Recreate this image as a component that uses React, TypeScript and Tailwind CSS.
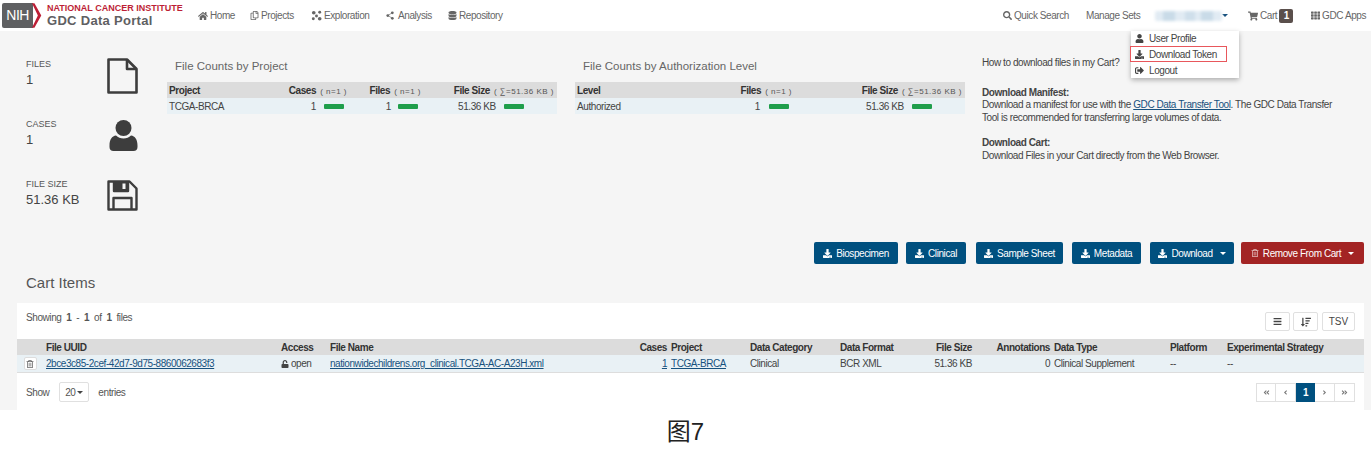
import { FaAngleLeft, FaAngleRight, FaAngleDoubleLeft, FaAngleDoubleRight, FaBars, FaRegCopy, FaDatabase, FaDownload, FaHome, FaSearch, FaShoppingCart, FaSignOutAlt, FaSortAmountDown, FaTh, FaUnlock, FaUser, FaRegTrashAlt } from "react-icons/fa"

const Caret = ({ color = "border-t-white" }: { color?: string }) => (
  <span className={`inline-block h-0 w-0 border-x-[3px] border-t-[3px] border-x-transparent ${color}`} />
)

const Bar = () => <span className="inline-block h-[5px] w-5 shrink-0 rounded-[1px] bg-[#1f9e4b]" />

// little molecule-ish icon used for Exploration / Analysis
const DotsIcon = ({ small }: { small?: boolean }) => (
  <svg width="11" height="11" viewBox="0 0 12 12" fill="currentColor">
    {small ? (
      <>
        <circle cx="3" cy="6" r="1.5" />
        <circle cx="8" cy="3" r="1.5" />
        <circle cx="8" cy="9" r="1.5" />
        <path d="M3 6 8 3M3 6l5 3" stroke="currentColor" strokeWidth="0.7" />
      </>
    ) : (
      <>
        <circle cx="3" cy="3" r="2" />
        <circle cx="9.5" cy="2.5" r="1.6" />
        <circle cx="6" cy="6.5" r="1.6" />
        <circle cx="2.5" cy="9.5" r="1.6" />
        <circle cx="9.5" cy="9.5" r="2" />
      </>
    )}
  </svg>
)

const FileIcon = () => (
  <svg width="31" height="36" viewBox="0 0 31 36" fill="none" stroke="#3d3d3d" strokeWidth="2.6" strokeLinejoin="round">
    <path d="M1.5 1.5h18.5l9.5 9.5v23.5h-28z" />
    <path d="M20 1.5v9.5h9.5" />
  </svg>
)

const UserIcon = () => (
  <svg width="29" height="31" viewBox="0 0 29 31" fill="#3d3d3d" className="ml-[2px]">
    <circle cx="14.5" cy="8" r="8" />
    <path d="M7 15.5c2 2 4.500 3 7.500 3s5.500-1 7.500-3c4 .5 6.500 4 6.500 10v1.500c0 2.500-1.500 4-4 4h-20c-2.500 0-4-1.500-4-4v-1.500c0-6 2.500-9.500 6.500-10z" />
  </svg>
)

const SaveIcon = () => (
  <svg width="31" height="31" viewBox="0 0 31 31" fill="none" stroke="#3d3d3d" strokeWidth="2.4" strokeLinejoin="round">
    <path d="M1.500 1.500h21l7 7v21h-28z" />
    <path d="M7 2v9h14v-9" fill="#3d3d3d" />
    <rect x="15.500" y="3.500" width="3" height="5.500" fill="#f5f5f5" stroke="none" />
    <path d="M6.500 29v-11h18v11" />
  </svg>
)

function NavBar() {
  const items = [
    { label: "Home", icon: <FaHome size={10} />, w: "w-[52px]" },
    { label: "Projects", icon: <FaRegCopy size={9} />, w: "w-[61px]" },
    { label: "Exploration", icon: <DotsIcon />, w: "w-[74px]" },
    { label: "Analysis", icon: <DotsIcon small />, w: "w-[63px]" },
    { label: "Repository", icon: <FaDatabase size={9} />, w: "w-[60px]" },
  ]
  return (
    <nav className="relative flex h-[31px] items-center bg-white text-[10px] tracking-[-0.42px] text-[#666]">
      <div className="ml-[2px] flex h-[25px] w-[40px] items-center">
        <div className="flex h-[25px] w-[32px] items-center justify-center rounded-l-[2px] bg-[#5f6062] text-[14px] text-white">NIH</div>
        <svg width="10" height="25" viewBox="0 0 10 25" className="-ml-px">
          <path d="M0 0h2.500L9.500 12.500 2.500 25H0l6-12.500z" fill="#bd1f36" />
        </svg>
      </div>
      <div className="ml-[5px] w-[151px] leading-none tracking-normal">
        <div className="text-[9px] font-bold whitespace-nowrap text-[#bd1f36]">NATIONAL CANCER INSTITUTE</div>
        <div className="mt-[1px] text-[13px] font-bold tracking-[0.3px] whitespace-nowrap text-[#5f6062]">GDC Data Portal</div>
      </div>
      <div className="flex">
        {items.map((it) => (
          <div key={it.label} className={`flex items-center gap-[2px] ${it.w}`}>
            {it.icon}
            <span className="whitespace-nowrap">{it.label}</span>
          </div>
        ))}
      </div>
      <div className="ml-auto flex items-center">
        <div className="flex w-[83px] items-center gap-[2px]"><FaSearch size={9} /><span>Quick Search</span></div>
        <div className="w-[69px]">Manage Sets</div>
        <div className="flex w-[93px] items-center">
          <div className="flex h-[10px] w-[67px] rounded-[2px] bg-[#e1ebf3] blur-[1.5px]">
            <span className="ml-[8px] h-full w-[12px] bg-[#c9dbe8]" />
            <span className="ml-[10px] h-full w-[10px] bg-[#cfdfeb]" />
            <span className="ml-[6px] h-full w-[12px] bg-[#c9dbe8]" />
          </div>
          <span className="flex"><Caret color="border-t-[#17517e]" /></span>
        </div>
        <div className="flex w-[63px] items-center gap-[2px]">
          <FaShoppingCart size={10} />
          <span>Cart</span>
          <span className="flex h-[14px] w-[14px] items-center justify-center rounded-[2px] bg-[#5a4f4c] text-[10px] font-bold text-white">1</span>
        </div>
        <div className="mr-[5px] flex w-[55px] items-center gap-[2px]"><FaTh size={11} /><span className="whitespace-nowrap">GDC Apps</span></div>
      </div>
      <div className="absolute top-[31px] left-[1131px] z-10 h-[47px] w-[108px] bg-white text-[#444] shadow-[0_2px_5px_rgba(0,0,0,0.3)]">
        <div className="flex h-[15px] items-center pl-[4px]"><FaUser size={9} /><span className="ml-[5px]">User Profile</span></div>
        <div className="-ml-px flex h-[16px] w-[97px] items-center border border-[#e8575c] pl-[4px]"><FaDownload size={9} /><span className="ml-[5px]">Download Token</span></div>
        <div className="flex h-[16px] items-center pl-[4px]"><FaSignOutAlt size={9} /><span className="ml-[5px]">Logout</span></div>
      </div>
    </nav>
  )
}

function Stat({ label, value, icon, offset }: { label: string; value: string; icon: React.ReactNode; offset: string }) {
  return (
    <div className="flex h-[60px] w-[141px] items-start pl-[26px]">
      <div className="w-[81px]">
        <div className="text-[9px] leading-[12px] text-[#555]">{label}</div>
        <div className="mt-[2px] text-[13px] leading-[16px] text-[#444]">{value}</div>
      </div>
      <div className={offset}>{icon}</div>
    </div>
  )
}

const Sub = ({ children }: { children: string }) => (
  <span className="ml-[4px] text-[8px] font-normal tracking-[0.5px] text-[#555]">{children}</span>
)

const headCell = "flex h-[16px] items-center bg-[#dcdcdc] px-[2px] text-[10px] font-bold tracking-[-0.42px] whitespace-nowrap text-[#333]"
const rowCell = "flex h-[16px] items-center bg-[#e9f1f5] px-[2px] text-[10px] tracking-[-0.42px] whitespace-nowrap text-[#444]"

function ProjectTable() {
  return (
    <div className="w-[390px]">
      <div className="h-[23px] pl-[8px] text-[11.5px] leading-[15px] text-[#666]">File Counts by Project</div>
      <div className={`${headCell} grid grid-cols-[107px_71px_74px_133px]`}>
        <span>Project</span>
        <span className="text-right">Cases<Sub>( n=1 )</Sub></span>
        <span className="text-right">Files<Sub>( n=1 )</Sub></span>
        <span className="text-right">File Size<Sub>( ∑=51.36 KB )</Sub></span>
      </div>
      <div className={`${rowCell} grid grid-cols-[107px_71px_74px_133px]`}>
        <span>TCGA-BRCA</span>
        <span className="flex items-center justify-end gap-[8px] pr-[3px]">1<Bar /></span>
        <span className="flex items-center justify-end gap-[7px] pr-[3px]">1<Bar /></span>
        <span className="flex items-center gap-[8px] pl-[37px]">51.36 KB<Bar /></span>
      </div>
    </div>
  )
}

function AuthTable() {
  return (
    <div className="w-[390px]">
      <div className="h-[23px] pl-[8px] text-[11.5px] leading-[15px] text-[#666]">File Counts by Authorization Level</div>
      <div className={`${headCell} grid grid-cols-[118px_97px_170px]`}>
        <span>Level</span>
        <span className="text-right">Files<Sub>( n=1 )</Sub></span>
        <span className="text-right">File Size<Sub>( ∑=51.36 KB )</Sub></span>
      </div>
      <div className={`${rowCell} grid grid-cols-[118px_97px_170px]`}>
        <span>Authorized</span>
        <span className="flex items-center justify-end gap-[9px] pr-[3px]">1<Bar /></span>
        <span className="flex items-center gap-[8px] pl-[74px]">51.36 KB<Bar /></span>
      </div>
    </div>
  )
}

function HelpPanel() {
  return (
    <div className="ml-[17px] w-[371px] pt-[26px] text-[10px] leading-[12.5px] tracking-[-0.42px] text-[#444]">
      <p>How to download files in my Cart?</p>
      <p className="mt-[17px] font-bold">Download Manifest:</p>
      <p>
        Download a manifest for use with the <span className="text-[#17517e] underline">GDC Data Transfer Tool</span>. The GDC Data Transfer
        <br />
        Tool is recommended for transferring large volumes of data.
      </p>
      <p className="mt-[13px] font-bold">Download Cart:</p>
      <p>Download Files in your Cart directly from the Web Browser.</p>
    </div>
  )
}

function ActionButton({ label, caret, red, w }: { label: string; caret?: boolean; red?: boolean; w: string }) {
  return (
    <button className={`flex h-[22px] items-center justify-center gap-[4px] rounded-[2px] text-[10px] tracking-[-0.42px] text-white ${w} ${red ? "bg-[#a32424]" : "bg-[#00507f]"}`}>
      {red ? <FaRegTrashAlt size={8} className="opacity-70" /> : <FaDownload size={9} />}
      <span>{label}</span>
      {caret && <span className="ml-[3px] flex"><Caret /></span>}
    </button>
  )
}

const gridCols = "grid grid-cols-[29px_235px_49px_300px_41px_79px_90px_85px_51px_78px_116px_57px_137px] items-center"

function CartTable() {
  return (
    <div className="text-[10px] tracking-[-0.44px]">
      <div className={`${gridCols} h-[16px] bg-[#dcdcdc] font-bold text-[#333]`}>
        <span />
        <span>File UUID</span>
        <span>Access</span>
        <span>File Name</span>
        <span className="pr-[4px] text-right">Cases</span>
        <span>Project</span>
        <span>Data Category</span>
        <span>Data Format</span>
        <span className="pr-[4px] text-right">File Size</span>
        <span className="pr-[4px] text-right">Annotations</span>
        <span>Data Type</span>
        <span>Platform</span>
        <span className="whitespace-nowrap">Experimental Strategy</span>
      </div>
      <div className={`${gridCols} h-[18px] border-b border-[#dddddd] bg-[#e9f1f5] text-[#444]`}>
        <span className="flex justify-center pr-[3px]">
          <span className="flex h-[13px] w-[13px] items-center justify-center rounded-[2px] border border-[#ddd] bg-white text-[#666]"><FaRegTrashAlt size={8} /></span>
        </span>
        <span className="text-[#17517e] underline">2bce3c85-2cef-42d7-9d75-8860062683f3</span>
        <span className="flex items-center gap-[2px]"><FaUnlock size={8} />open</span>
        <span className="whitespace-nowrap text-[#17517e] underline">nationwidechildrens.org_clinical.TCGA-AC-A23H.xml</span>
        <span className="pr-[4px] text-right text-[#17517e] underline">1</span>
        <span className="text-[#17517e] underline">TCGA-BRCA</span>
        <span>Clinical</span>
        <span>BCR XML</span>
        <span className="pr-[4px] text-right whitespace-nowrap">51.36 KB</span>
        <span className="pr-[4px] text-right">0</span>
        <span>Clinical Supplement</span>
        <span>--</span>
        <span>--</span>
      </div>
    </div>
  )
}

function Pager() {
  const cell = "flex h-[19px] w-[20px] items-center justify-center border border-l-0 border-[#e0e0e0] text-[#777]"
  return (
    <div className="flex rounded-[2px] bg-white">
      <span className="flex h-[19px] w-[20px] items-center justify-center border border-[#e0e0e0] text-[#777]"><FaAngleDoubleLeft size={7} /></span>
      <span className={cell}><FaAngleLeft size={7} /></span>
      <span className="flex h-[19px] w-[19px] items-center justify-center bg-[#00507f] text-[10px] font-bold text-white">1</span>
      <span className={cell}><FaAngleRight size={7} /></span>
      <span className={cell}><FaAngleDoubleRight size={7} /></span>
    </div>
  )
}

export default function App() {
  return (
    <div className="h-[450px] w-[1371px] overflow-hidden bg-white font-['Liberation_Sans',Arial,sans-serif]">
      <NavBar />
      <main className="h-[379px] bg-[#f5f5f5]">
        {/* top section: stats, count tables, help */}
        <div className="flex h-[211px]">
          <div className="w-[167px] shrink-0 pt-[27px]">
            <Stat label="FILES" value="1" icon={<FileIcon />} offset="mt-0" />
            <Stat label="CASES" value="1" icon={<UserIcon />} offset="mt-[2px]" />
            <Stat label="FILE SIZE" value="51.36 KB" icon={<SaveIcon />} offset="mt-[2px]" />
          </div>
          <div className="flex gap-[18px] pt-[28px]">
            <ProjectTable />
            <AuthTable />
          </div>
          <HelpPanel />
        </div>

        {/* action buttons */}
        <div className="flex justify-end pr-[7px]">
          <ActionButton label="Biospecimen" w="w-[84px]" />
          <ActionButton label="Clinical" w="ml-[8px] w-[60px]" />
          <ActionButton label="Sample Sheet" w="ml-[10px] w-[87px]" />
          <ActionButton label="Metadata" w="ml-[9px] w-[69px]" />
          <ActionButton label="Download" caret w="ml-[9px] w-[84px]" />
          <ActionButton label="Remove From Cart" caret red w="ml-[7px] w-[123px]" />
        </div>

        <h2 className="mt-[9px] h-[30px] pl-[26px] text-[15px] leading-[20px] text-[#555]">Cart Items</h2>

        {/* cart panel */}
        <div className="mr-[7px] ml-[17px] h-[107px] bg-white">
          <div className="flex h-[36px] items-start justify-between pt-[8px] pr-[9px] pl-[9px]">
            <span className="text-[10px] leading-[13px] tracking-[-0.42px] text-[#555] [word-spacing:2.5px]">Showing <b>1</b> - <b>1</b> of <b>1</b> files</span>
            <div className="mt-[1px] flex text-[#444]">
              <span className="flex h-[19px] w-[25px] items-center justify-center rounded-[2px] border border-[#e0e0e0]"><FaBars size={9} /></span>
              <span className="ml-[3px] flex h-[19px] w-[25px] items-center justify-center rounded-[2px] border border-[#e0e0e0]"><FaSortAmountDown size={10} /></span>
              <span className="ml-[4px] flex h-[19px] w-[33px] items-center justify-center rounded-[2px] border border-[#e0e0e0] text-[10px]">TSV</span>
            </div>
          </div>
          <CartTable />
          <div className="flex items-center justify-between pt-[9px] pr-[9px] pl-[9px] text-[10px] tracking-[-0.42px] text-[#555]">
            <div className="flex items-center">
              <span>Show</span>
              <span className="ml-[10px] flex h-[20px] w-[30px] items-center justify-center gap-[2px] rounded-[2px] border border-[#e0e0e0]">20<Caret color="border-t-[#444]" /></span>
              <span className="ml-[9px]">entries</span>
            </div>
            <Pager />
          </div>
        </div>
      </main>
      <div className="pt-[8px] text-center font-['Noto_Sans_CJK_SC',sans-serif] text-[24px] leading-[24px] text-[#222]">
        图<span className="font-['Liberation_Sans',sans-serif]">7</span>
      </div>
    </div>
  )
}
